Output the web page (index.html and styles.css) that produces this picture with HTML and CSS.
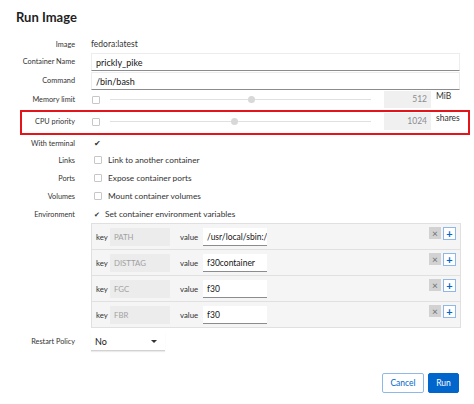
FILE: index.html
```html
<!DOCTYPE html>
<html lang="en">
<head>
    <meta charset="UTF-8">
    <title>Run Image</title>
    <link rel="stylesheet" href="styles.css">
</head>
<body>
    <h1 class="title">Run Image</h1>

    <form class="run-form">
        <!-- Image -->
        <div class="row row-image">
            <label>Image</label>
            <span class="static">fedora:latest</span>
        </div>

        <!-- Container Name -->
        <div class="row">
            <label>Container Name</label>
            <input type="text" class="text-input" value="prickly_pike">
        </div>

        <!-- Command -->
        <div class="row">
            <label>Command</label>
            <input type="text" class="text-input" value="/bin/bash">
        </div>

        <!-- Memory limit -->
        <div class="row">
            <label>Memory limit</label>
            <div class="slider-line">
                <span class="box"></span>
                <div class="track"><span class="thumb" style="left: 54%"></span></div>
                <span class="num">512</span>
                <span class="unit">MiB</span>
            </div>
        </div>

        <!-- CPU priority -->
        <div class="row highlight">
            <label>CPU priority</label>
            <div class="slider-line">
                <span class="box"></span>
                <div class="track"><span class="thumb" style="left: 47.5%"></span></div>
                <span class="num">1024</span>
                <span class="unit">shares</span>
            </div>
        </div>

        <!-- With terminal -->
        <div class="row row-small">
            <label>With terminal</label>
            <span class="tick">&#10004;</span>
        </div>

        <div class="row row-check">
            <label>Links</label>
            <span class="check"><span class="box"></span>Link to another container</span>
        </div>

        <div class="row row-check">
            <label>Ports</label>
            <span class="check"><span class="box"></span>Expose container ports</span>
        </div>

        <div class="row row-check">
            <label>Volumes</label>
            <span class="check"><span class="box"></span>Mount container volumes</span>
        </div>

        <div class="row row-check">
            <label>Environment</label>
            <span class="check"><span class="tick small">&#10004;</span>Set container environment variables</span>
        </div>

        <!-- Environment variables -->
        <div class="row row-env">
            <label></label>
            <div class="env-table">
                <div class="env-row">
                    <span class="lbl">key</span>
                    <span class="key-input">PATH</span>
                    <span class="lbl val-lbl">value</span>
                    <span class="val-input">/usr/local/sbin:/</span>
                    <span class="btn-remove">&#215;</span>
                    <span class="btn-add">+</span>
                </div>
                <div class="env-row">
                    <span class="lbl">key</span>
                    <span class="key-input">DISTTAG</span>
                    <span class="lbl val-lbl">value</span>
                    <span class="val-input">f30container</span>
                    <span class="btn-remove">&#215;</span>
                    <span class="btn-add">+</span>
                </div>
                <div class="env-row">
                    <span class="lbl">key</span>
                    <span class="key-input">FGC</span>
                    <span class="lbl val-lbl">value</span>
                    <span class="val-input">f30</span>
                    <span class="btn-remove">&#215;</span>
                    <span class="btn-add">+</span>
                </div>
                <div class="env-row">
                    <span class="lbl">key</span>
                    <span class="key-input">FBR</span>
                    <span class="lbl val-lbl">value</span>
                    <span class="val-input">f30</span>
                    <span class="btn-remove">&#215;</span>
                    <span class="btn-add">+</span>
                </div>
            </div>
        </div>

        <!-- Restart Policy -->
        <div class="row row-restart">
            <label>Restart Policy</label>
            <div class="select">No <span class="caret"></span></div>
        </div>

        <!-- Footer -->
        <div class="footer">
            <button type="button" class="btn btn-cancel">Cancel</button>
            <button type="button" class="btn btn-run">Run</button>
        </div>
    </form>
</body>
</html>
```

FILE: styles.css
```css
body {
    margin: 0;
    background: #fff;
    font-family: Lato, "Noto Sans", sans-serif;
    color: #151515;
}

.title {
    margin: 0;
    padding: 9px 0 0 16px;
    height: 27px;
    font-size: 13px;
    font-weight: 700;
    color: #1f1f1f;
}

.run-form {
    padding: 0 14px 0 16px;
}

.row {
    display: grid;
    grid-template-columns: 59px 1fr;
    column-gap: 16px;
    align-items: center;
    height: 19px;
    font-size: 7.3px;
}

.row label {
    text-align: right;
    color: #333;
}

.row-image {
    height: 16px;
}

.static {
    font-size: 8.5px;
    color: #333;
}

.text-input {
    font: inherit;
    font-size: 9px;
    height: 18px;
    box-sizing: border-box;
    border: 1px solid #ededed;
    border-bottom-color: #8a8d90;
    padding: 0 4px;
    color: #151515;
    margin-top: 1px;
}

.slider-line {
    display: flex;
    align-items: center;
}

.box {
    width: 6px;
    height: 6px;
    border: 1px solid #c7c7c7;
    border-radius: 1px;
    margin-left: 1px;
    flex: none;
}

.track {
    position: relative;
    height: 1px;
    background: #e0e0e0;
    width: 261px;
    margin-left: 10px;
}

.thumb {
    position: absolute;
    top: -3px;
    width: 7px;
    height: 7px;
    margin-left: -3px;
    border-radius: 50%;
    background: #d8d8d8;
}

.num {
    margin-left: 13px;
    width: 47px;
    height: 17px;
    line-height: 17px;
    background: #f0f0f0;
    text-align: right;
    padding-right: 4px;
    box-sizing: border-box;
    color: #8a8d90;
    font-size: 8.5px;
}

.unit {
    margin-left: 5px;
    color: #333;
    font-size: 8.5px;
    align-self: flex-start;
}

.highlight {
    position: relative;
    height: 21px;
    margin-top: 2px;
}

.highlight::after {
    content: "";
    position: absolute;
    left: 4px;
    right: -10px;
    top: -1px;
    bottom: -3px;
    border: 2px solid #e4141b;
}

.row-small {
    height: 16px;
    margin-top: 3px;
}

.tick {
    font-size: 8px;
    color: #333;
    margin-left: 3px;
}

.tick.small {
    margin-left: 3px;
    margin-right: 5px;
    font-size: 7px;
}

.row-check {
    height: 18px;
}

.check {
    display: flex;
    align-items: center;
    font-size: 8.3px;
    color: #333;
}

.check .box {
    margin-left: 3px;
    margin-right: 6px;
}

.row-env {
    height: auto;
    align-items: start;
}

.env-table {
    border: 1px solid #e0e0e0;
    background: #f5f5f5;
    margin-right: -1px;
}

.env-row {
    display: flex;
    align-items: center;
    height: 25px;
    border-top: 1px solid #e0e0e0;
    padding-left: 4px;
    font-size: 7.8px;
}

.env-row:first-child {
    border-top: none;
}

.lbl {
    color: #333;
    width: 14px;
}

.key-input {
    width: 60px;
    height: 18px;
    line-height: 18px;
    background: #ececec;
    color: #a0a0a0;
    padding-left: 4px;
    box-sizing: border-box;
    margin-right: 10px;
}

.val-lbl {
    width: 23px;
}

.val-input {
    width: 64px;
    height: 18px;
    line-height: 18px;
    background: #fff;
    border-bottom: 1px solid #8a8d90;
    padding-left: 4px;
    box-sizing: border-box;
    overflow: hidden;
    white-space: nowrap;
    font-size: 8.5px;
    color: #151515;
}

.btn-remove {
    margin-left: auto;
    width: 12px;
    height: 12px;
    line-height: 12px;
    text-align: center;
    background: #d2d2d2;
    color: #6a6e73;
    font-size: 10px;
    margin-top: -7px;
}

.btn-add {
    width: 11px;
    height: 11px;
    line-height: 11px;
    text-align: center;
    border: 1px solid #8fb8e8;
    background: #fff;
    color: #0066cc;
    font-weight: 700;
    font-size: 11px;
    margin-left: 2px;
    margin-right: 4px;
    margin-top: -7px;
}

.row-restart {
    height: 20px;
    margin-top: 3px;
}

.select {
    width: 74px;
    height: 19px;
    line-height: 19px;
    box-sizing: border-box;
    padding-left: 4px;
    border-bottom: 1px solid #d2d2d2;
    box-shadow: 0 1px 1px rgba(0, 0, 0, 0.08);
    font-size: 9px;
    position: relative;
}

.caret {
    position: absolute;
    right: 8px;
    top: 8px;
    border-left: 3px solid transparent;
    border-right: 3px solid transparent;
    border-top: 3px solid #333;
}

.footer {
    display: flex;
    justify-content: flex-end;
    gap: 4px;
    margin-top: 22px;
    margin-right: 1px;
}

.btn {
    font-family: inherit;
    font-size: 8.5px;
    height: 20px;
    border-radius: 2px;
    padding: 0;
}

.btn-cancel {
    width: 42px;
    background: #fff;
    color: #0066cc;
    border: 1px solid #8fb8e8;
}

.btn-run {
    width: 31px;
    background: #0066cc;
    color: #fff;
    border: 1px solid #0066cc;
}
```
